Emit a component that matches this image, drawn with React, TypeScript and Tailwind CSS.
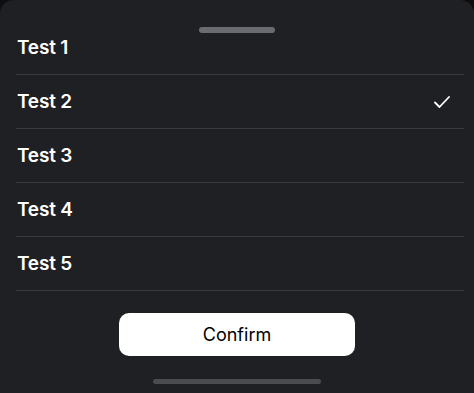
import { useState } from 'react';

const options = ['Test 1', 'Test 2', 'Test 3', 'Test 4', 'Test 5'];

export default function App() {
  const [selected, setSelected] = useState('Test 2');

  return (
    <div className="w-[474px] h-[393px] bg-[#0e0e10] overflow-hidden" style={{ fontFamily: 'Inter, "Noto Sans", sans-serif' }}>
      <div className="relative h-full bg-[#1f2024] rounded-t-[14px] flex flex-col">
        {/* Grabber */}
        <div className="absolute top-[27px] left-[199px] w-[76px] h-[6px] rounded-full bg-[#6b6c71]" />

        {/* Options */}
        <div className="mt-[21px] ml-4 mr-[10px] flex flex-col">
          {options.map(o => (
            <div
              key={o}
              onClick={() => setSelected(o)}
              className="w-full h-[54px] border-b border-[#3a3b3f] flex items-center justify-between pl-[1px] pr-[14px] cursor-pointer"
            >
              <span className="text-[19px] font-semibold text-white tracking-[-0.2px] pt-[1px]">{o}</span>
              {selected === o && (
                <svg width="16" height="12" viewBox="0 0 16 12" fill="none">
                  <path d="M1 6.5 L5.5 11 L15 1" stroke="white" strokeWidth="1.8" strokeLinecap="round" strokeLinejoin="round" />
                </svg>
              )}
            </div>
          ))}
        </div>

        {/* Confirm */}
        <div className="mt-[22px] flex justify-center">
          <button className="w-[236px] h-[43px] rounded-[10px] bg-white text-black text-[18px]">Confirm</button>
        </div>

        {/* Home indicator */}
        <div className="mt-[23px] flex justify-center">
          <div className="w-[168px] h-[5px] rounded-full bg-[#4b4c50]" />
        </div>
      </div>
    </div>
  );
}
